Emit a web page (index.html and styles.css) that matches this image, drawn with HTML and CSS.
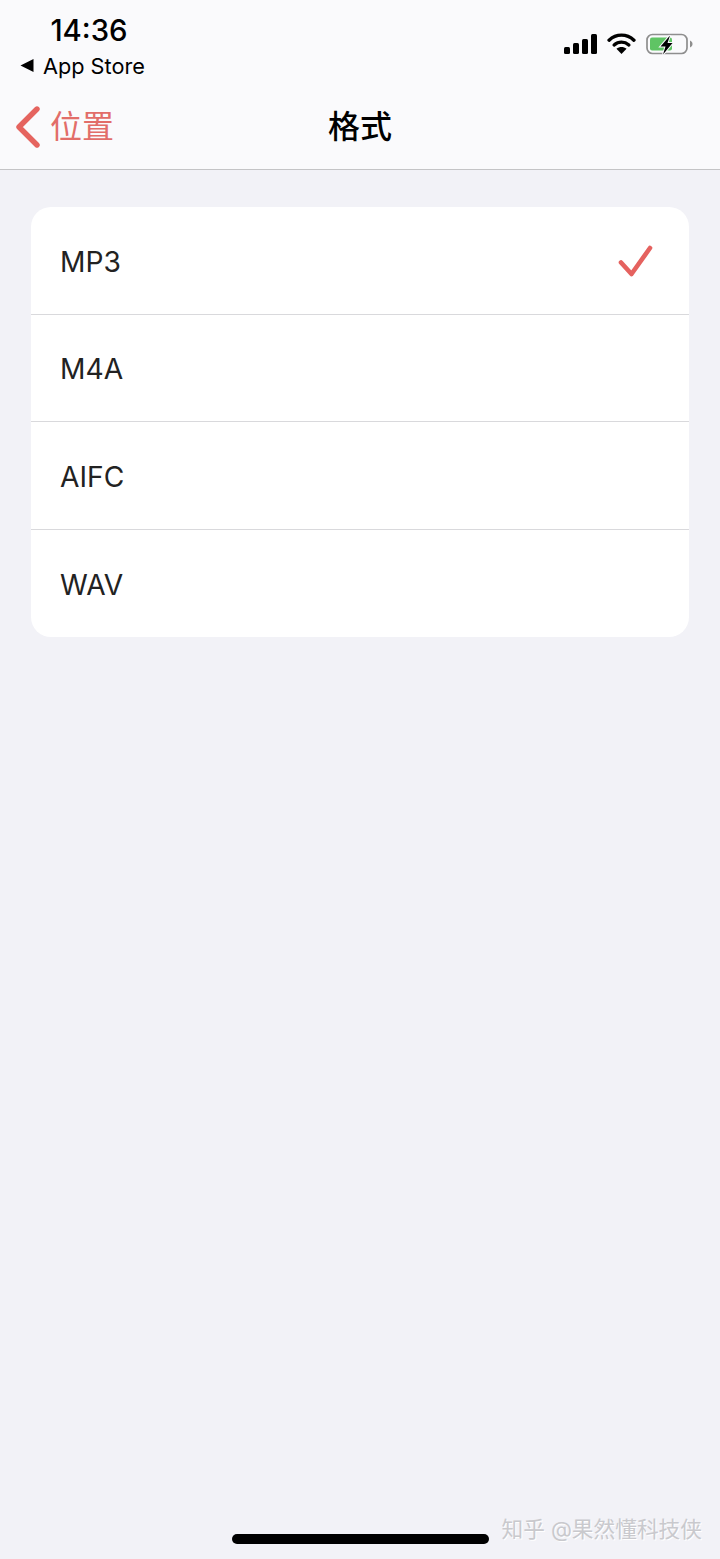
FILE: index.html
```html
<!DOCTYPE html>
<html lang="zh-CN">
<head>
    <meta charset="UTF-8">
    <meta name="viewport" content="width=device-width, initial-scale=1.0">
    <title>格式</title>
    <link rel="stylesheet" href="styles.css">
</head>
<body>
    <div class="page">
        <header class="top-bar">
            <div class="status-bar">
                <div class="status-left">
                    <div class="clock">14:36</div>
                    <div class="back-app">
                        <svg class="back-app-arrow" width="14" height="13" viewBox="0 0 14 13"><path d="M0.5 6.5L13.5 0V13Z" fill="#000"/></svg>
                        <span>App Store</span>
                    </div>
                </div>
                <div class="status-right">
                    <svg width="33" height="20" viewBox="0 0 33 20">
                        <rect x="0" y="13" width="6" height="7" rx="1.5" fill="#000"/>
                        <rect x="9" y="9" width="6" height="11" rx="1.5" fill="#000"/>
                        <rect x="18" y="5" width="6" height="15" rx="1.5" fill="#000"/>
                        <rect x="27" y="0" width="6" height="20" rx="1.5" fill="#000"/>
                    </svg>
                    <svg width="29" height="21" viewBox="0 0 30 22">
                        <path d="M2 7.5C9.5 0.5 20.5 0.5 28 7.5" fill="none" stroke="#000" stroke-width="3.6" stroke-linecap="round"/>
                        <path d="M7.3 12.5C11.8 8.6 18.2 8.6 22.7 12.5" fill="none" stroke="#000" stroke-width="3.6" stroke-linecap="round"/>
                        <path d="M15 22L9.7 16.5C12.8 14 17.2 14 20.3 16.5Z" fill="#000"/>
                    </svg>
                    <svg class="battery" width="48" height="22" viewBox="0 0 48 22">
                        <rect x="1" y="1.5" width="40" height="19" rx="5.5" fill="none" stroke="#8e8e8e" stroke-width="1.7"/>
                        <rect x="4" y="4.5" width="22" height="13" rx="2" fill="#5fc464"/>
                        <path d="M44 7.5C45.8 8.2 46.5 9.5 46.5 11C46.5 12.5 45.8 13.8 44 14.5Z" fill="#8e8e8e"/>
                        <path class="bolt" d="M24 2.5L14.5 13.5H19.5L17 21.5L26.5 10H21.5Z"/>
                    </svg>
                </div>
            </div>
            <nav class="nav-bar">
                <a class="nav-back">
                    <svg width="26" height="42" viewBox="0 0 26 42"><path d="M23 3L5 21L23 39" fill="none" stroke="#e5645f" stroke-width="5.4" stroke-linecap="round" stroke-linejoin="round"/></svg>
                    <span>位置</span>
                </a>
                <h1 class="nav-title">格式</h1>
            </nav>
        </header>

        <main class="content">
            <ul class="format-list">
                <li class="format-item">
                    <span>MP3</span>
                    <svg class="check" width="38" height="36" viewBox="0 0 38 36"><path d="M4 18.5L14.5 30L33 4" fill="none" stroke="#e5625f" stroke-width="4.6" stroke-linecap="round" stroke-linejoin="round"/></svg>
                </li>
                <li class="format-item"><span>M4A</span></li>
                <li class="format-item"><span>AIFC</span></li>
                <li class="format-item"><span>WAV</span></li>
            </ul>
        </main>

        <footer class="home-area">
            <div class="home-bar"></div>
            <div class="watermark">知乎 @果然懂科技侠</div>
        </footer>
    </div>
</body>
</html>
```

FILE: styles.css
```css
* {
    box-sizing: border-box;
}
body {
    margin: 0;
    background-color: #f2f2f7;
    font-family: Inter, "Noto Sans CJK SC", sans-serif;
    color: #222;
}
.page {
    position: relative;
    display: flex;
    flex-direction: column;
    height: 1559px;
    overflow: hidden;
}
.top-bar {
    height: 170px;
    background-color: #fafafc;
    border-bottom: 1px solid #c4c4c6;
}
.status-bar {
    display: flex;
    justify-content: space-between;
    height: 84px;
    padding: 12px 26px 0 20px;
}
.status-left {
    display: flex;
    flex-direction: column;
}
.clock {
    width: 138px;
    padding-top: 1px;
    height: 36px;
    text-align: center;
    font-size: 29.3px;
    line-height: 36px;
    font-weight: 500;
    color: #000;
}
.back-app {
    display: flex;
    align-items: center;
    gap: 9px;
    height: 35px;
    font-size: 21.7px;
    color: #000;
}
.status-right {
    display: flex;
    align-items: center;
    gap: 10px;
    height: 63px;
}
.bolt {
    fill: #000;
    stroke: #fafafc;
    stroke-width: 2px;
    paint-order: stroke fill;
}
.nav-bar {
    position: relative;
    display: flex;
    justify-content: center;
    align-items: center;
    height: 85px;
}
.nav-back {
    position: absolute;
    left: 14px;
    top: 22px;
    display: flex;
    align-items: center;
    gap: 10px;
    color: #e26d69;
    font-size: 32px;
    line-height: 42px;
}
.nav-title {
    margin: 0 0 5px;
    font-size: 32px;
    font-weight: 500;
    color: #000;
}
.content {
    flex: 1;
    padding: 37px 31px 0;
}
.format-list {
    list-style: none;
    margin: 0;
    padding: 0;
    background-color: #fff;
    border-radius: 20px;
    overflow: hidden;
}
.format-item {
    display: flex;
    justify-content: space-between;
    align-items: center;
    height: 107.5px;
    padding: 3px 34.5px 0 29px;
    font-size: 28.2px;
    border-bottom: 1px solid #d9d9dc;
}
.format-item:last-child {
    border-bottom: none;
}
.check {
    margin-top: 1px;
}
.home-area {
    display: flex;
    justify-content: center;
    height: 25px;
    flex-shrink: 0;
}
.home-bar {
    width: 257px;
    height: 10px;
    border-radius: 5px;
    background-color: #000;
}
.watermark {
    position: absolute;
    right: 18px;
    bottom: 14px;
    font-size: 21.7px;
    line-height: 32px;
    color: #c9c9cd;
    text-shadow: 1px 1px 0 #fff;
}
```
